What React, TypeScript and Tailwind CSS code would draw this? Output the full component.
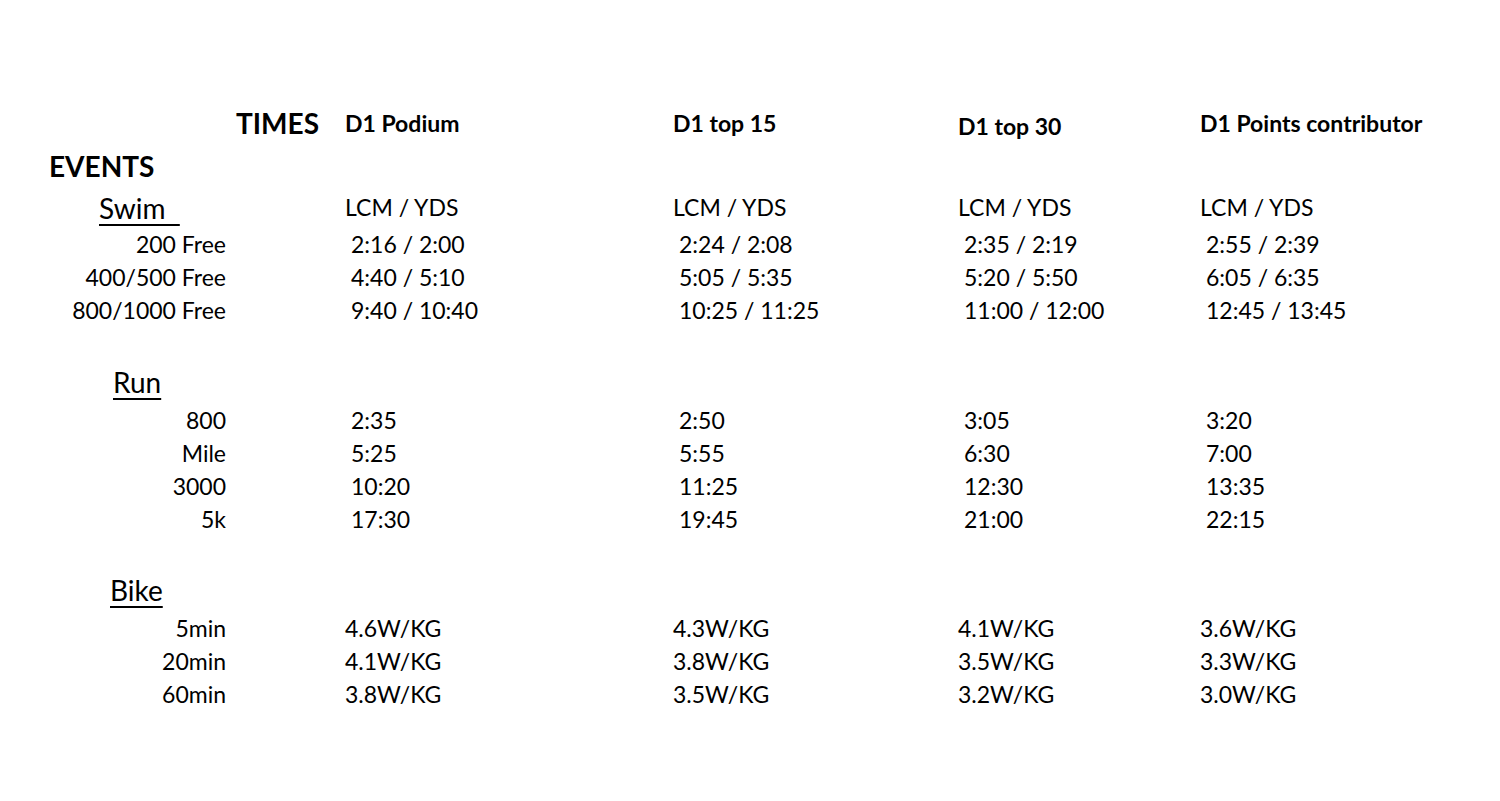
import React from "react";

const font = { fontFamily: "Lato, 'Open Sans', sans-serif" };

const colW = ["w-[328px]", "w-[285px]", "w-[242px]", "flex-1"];

function DataRow({ label, values, indent = true }: { label: string; values: string[]; indent?: boolean }) {
  return (
    <div className="flex h-[33px] items-center text-[23px] leading-[33px]">
      <div className="w-[226px] shrink-0 text-right whitespace-nowrap">{label}</div>
      <div className="w-[119px] shrink-0" />
      {values.map((v, i) => (
        <div key={i} className={`${colW[i]} shrink-0 whitespace-nowrap ${indent ? "pl-[6px]" : ""}`}>
          {v}
        </div>
      ))}
    </div>
  );
}

function Section({ title, pad, className = "" }: { title: string; pad: string; className?: string }) {
  return (
    <div className={`flex items-center pb-[6px] ${className}`}>
      <div className={`text-[28px] leading-[34px] underline decoration-2 underline-offset-[5px] whitespace-pre ${pad}`}>{title}</div>
    </div>
  );
}

export default function App() {
  return (
    <div className="w-[1500px] h-[801px] bg-white text-black overflow-hidden" style={font}>
      <div className="pt-[105px]">
        {/* header row */}
        <div className="flex h-[40px] items-center pb-[4px]">
          <div className="w-[319px] shrink-0 text-right text-[28px] font-bold">TIMES</div>
          <div className="w-[26px] shrink-0" />
          <div className="w-[328px] shrink-0 text-[23px] font-bold">D1 Podium</div>
          <div className="w-[285px] shrink-0 text-[23px] font-bold">D1 top 15</div>
          <div className="w-[242px] shrink-0 text-[23px] font-bold mt-[6px]">D1 top 30</div>
          <div className="flex-1 text-[23px] font-bold">D1 Points contributor</div>
        </div>
        {/* events */}
        <div className="flex h-[42px] items-center pl-[49px] text-[28px] font-bold">EVENTS</div>
        {/* swim */}
        <div className="flex h-[41px] items-center">
          <div className="w-[345px] shrink-0">
            <span className="pl-[99px] text-[28px] underline decoration-2 underline-offset-[5px] whitespace-pre">Swim  </span>
          </div>
          {["LCM / YDS", "LCM / YDS", "LCM / YDS", "LCM / YDS"].map((v, i) => (
            <div key={i} className={`${colW[i]} shrink-0 text-[23px]`}>{v}</div>
          ))}
        </div>
        <DataRow label="200 Free" values={["2:16 / 2:00", "2:24 / 2:08", "2:35 / 2:19", "2:55 / 2:39"]} />
        <DataRow label="400/500 Free" values={["4:40 / 5:10", "5:05 / 5:35", "5:20 / 5:50", "6:05 / 6:35"]} />
        <DataRow label="800/1000 Free" values={["9:40 / 10:40", "10:25 / 11:25", "11:00 / 12:00", "12:45 / 13:45"]} />

        <Section title="Run" pad="pl-[113px]" className="mt-[39px] h-[38px]" />
        <DataRow label="800" values={["2:35", "2:50", "3:05", "3:20"]} />
        <DataRow label="Mile" values={["5:25", "5:55", "6:30", "7:00"]} />
        <DataRow label="3000" values={["10:20", "11:25", "12:30", "13:35"]} />
        <DataRow label="5k" values={["17:30", "19:45", "21:00", "22:15"]} />

        <Section title="Bike" pad="pl-[110px]" className="mt-[38px] h-[38px]" />
        <DataRow label="5min" indent={false} values={["4.6W/KG", "4.3W/KG", "4.1W/KG", "3.6W/KG"]} />
        <DataRow label="20min" indent={false} values={["4.1W/KG", "3.8W/KG", "3.5W/KG", "3.3W/KG"]} />
        <DataRow label="60min" indent={false} values={["3.8W/KG", "3.5W/KG", "3.2W/KG", "3.0W/KG"]} />
      </div>
    </div>
  );
}
